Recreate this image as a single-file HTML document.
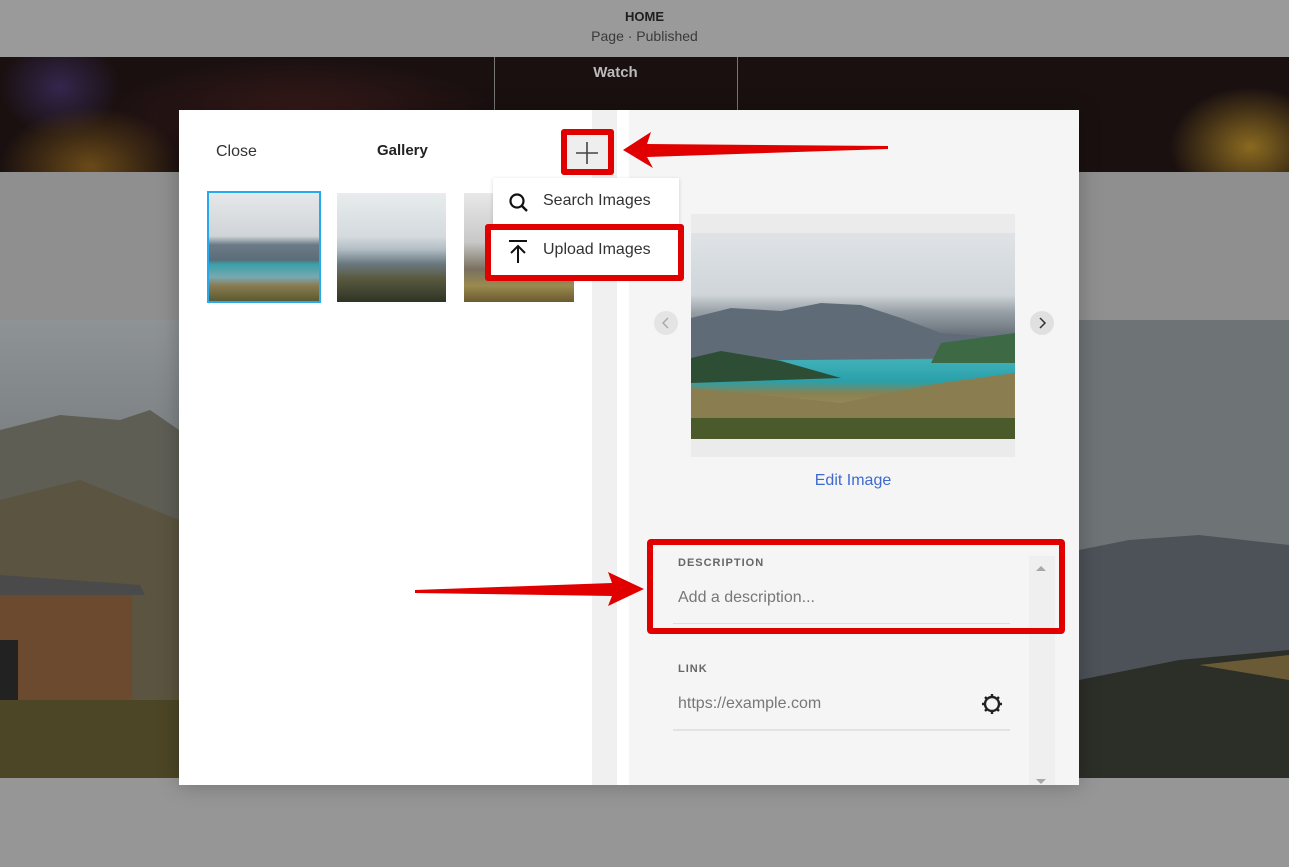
<!DOCTYPE html>
<html><head><meta charset="utf-8">
<style>
*{margin:0;padding:0;box-sizing:border-box}
body{width:1289px;height:867px;overflow:hidden;position:relative;background:#969696;font-family:"Liberation Sans",sans-serif}
.abs{position:absolute}
</style></head><body>
<!-- top bar -->
<div class="abs" style="left:0;top:0;width:1289px;height:57px;background:#9a9a9a"></div>
<div class="abs" style="left:0;top:9px;width:1289px;text-align:center;font-size:13px;font-weight:bold;color:#1e1e1e">HOME</div>
<div class="abs" style="left:0;top:28px;width:1289px;text-align:center;font-size:14px;color:#3a3a3a">Page · Published</div>
<!-- dark banner -->
<div class="abs" style="left:0;top:57px;width:1289px;height:115px;background:radial-gradient(ellipse 90px 60px at 90px 110px,#6a4a18,transparent),radial-gradient(ellipse 60px 50px at 60px 30px,#33264d,transparent),radial-gradient(ellipse 80px 60px at 1250px 90px,#8a6a20,transparent),radial-gradient(ellipse 200px 60px at 300px 60px,#3a1a1a,transparent),#1a1010"></div>
<div class="abs" style="left:494px;top:57px;width:1px;height:53px;background:#777"></div>
<div class="abs" style="left:737px;top:57px;width:1px;height:53px;background:#777"></div>
<div class="abs" style="left:494px;top:64px;width:243px;text-align:center;font-size:15px;font-weight:bold;color:#bbb">Watch</div>
<!-- gray middle -->
<div class="abs" style="left:0;top:172px;width:1289px;height:148px;background:#8f8f8f"></div>
<!-- mountain image sides -->
<div class="abs" style="left:0;top:320px;width:1289px;height:458px;background:linear-gradient(180deg,#8e9396 0%,#7d8284 25%,#5e5a4e 50%,#3e3b30 75%,#33301f 100%)"></div>
<svg class="abs" style="left:0;top:320px" width="179" height="458"><polygon points="0,110 60,95 120,100 150,90 179,110 179,458 0,458" fill="#5f5e55"/><polygon points="0,180 80,160 179,200 179,458 0,458" fill="#5a5440"/><polygon points="0,255 140,265 145,275 0,275" fill="#4a4a4a"/><rect x="0" y="275" width="132" height="140" fill="#6b4a30"/><rect x="0" y="320" width="18" height="90" fill="#222"/><rect x="0" y="380" width="179" height="78" fill="#4c4626"/></svg>
<svg class="abs" style="left:1079px;top:320px" width="210" height="458"><rect width="210" height="458" fill="#6e7376"/><polygon points="0,230 50,220 120,215 210,225 210,458 0,458" fill="#4c5258"/><polygon points="0,360 100,340 210,330 210,458 0,458" fill="#2c2e28"/><polygon points="120,345 210,335 210,360" fill="#6a5a35"/></svg>
<!-- modal -->
<div class="abs" style="left:179px;top:110px;width:900px;height:675px;background:#fff;box-shadow:0 0 20px rgba(0,0,0,.25)"></div>
<div class="abs" style="left:592px;top:110px;width:25px;height:675px;background:#f0f0f0"></div>
<div class="abs" style="left:629px;top:110px;width:450px;height:675px;background:#f5f5f5"></div>
<div class="abs" style="left:216px;top:143px;font-size:16px;color:#333">Close</div>
<div class="abs" style="left:377px;top:142px;font-size:15px;font-weight:bold;color:#222">Gallery</div>
<!-- thumbnails -->
<div class="abs" style="left:207px;top:191px;width:114px;height:112px;border:2px solid #27a9f0;background:linear-gradient(180deg,#e6e8ea 0%,#cfd4d8 40%,#6b7a86 48%,#5b6d7a 62%,#3aa0a8 66%,#7aa8b0 78%,#8a7a50 86%,#5a5a30 100%)"></div>
<div class="abs" style="left:337px;top:193px;width:109px;height:109px;background:linear-gradient(180deg,#e8ecee 0%,#d4dadd 40%,#b0bcc4 52%,#6a7880 65%,#5a5a40 78%,#2e3424 100%)"></div>
<div class="abs" style="left:464px;top:193px;width:110px;height:109px;background:linear-gradient(180deg,#e8e8e8 0%,#c8c8c8 45%,#7a7060 70%,#9a8a50 85%,#6a5a30 100%)"></div>
<!-- plus button -->
<div class="abs" style="left:561px;top:129px;width:53px;height:46px;border:6px solid #e00000;border-radius:3px;background:#eee"></div>
<svg class="abs" style="left:574px;top:140px" width="26" height="26"><path d="M13 2V24M2 13H24" stroke="#444" stroke-width="1.6"/></svg>
<!-- dropdown -->
<div class="abs" style="left:493px;top:178px;width:186px;height:100px;background:#fff;box-shadow:0 1px 4px rgba(0,0,0,.15)"></div>
<svg class="abs" style="left:508px;top:192px" width="22" height="22"><circle cx="9" cy="9" r="6.5" stroke="#111" stroke-width="2.2" fill="none"/><path d="M14 14L19 19" stroke="#111" stroke-width="2.4"/></svg>
<div class="abs" style="left:543px;top:192px;font-size:16px;color:#333">Search Images</div>
<div class="abs" style="left:485px;top:224px;width:199px;height:57px;border:6px solid #e00000;border-radius:3px;background:#fff"></div>
<svg class="abs" style="left:507px;top:239px" width="22" height="26"><path d="M2 2H20M11 24V7M4 14L11 7L18 14" stroke="#111" stroke-width="2" fill="none"/></svg>
<div class="abs" style="left:543px;top:241px;font-size:16px;color:#333">Upload Images</div>
<!-- arrow top -->
<svg class="abs" style="left:615px;top:128px" width="280" height="44"><polygon points="8,22 36,4 32,16 273,18 273,21 32,29 38,40" fill="#e00000"/></svg>
<!-- preview -->
<div class="abs" style="left:691px;top:214px;width:324px;height:243px;background:#ebebeb"></div>
<div class="abs" style="left:691px;top:233px;width:324px;height:206px;background:linear-gradient(180deg,#dfe3e6 0%,#cfd5d9 30%,#9aa2a8 38%,#6e7680 48%,#5a6870 58%,#3fb0b8 62%,#2aa0aa 72%,#8a8050 78%,#a09060 88%,#4a5a30 100%)"></div>
<svg class="abs" style="left:691px;top:233px" width="324" height="206"><polygon points="0,85 40,75 90,78 130,70 170,72 210,85 250,100 324,105 324,125 0,128" fill="#5f6c78"/><polygon points="0,125 30,118 90,128 150,145 0,150" fill="#2d4d35"/><polygon points="250,110 324,100 324,130 240,130" fill="#3d6a45"/><polygon points="0,155 150,170 250,150 324,140 324,206 0,206" fill="#8a7d50"/><rect y="185" width="324" height="21" fill="#4a5a2a"/></svg>
<div class="abs" style="left:654px;top:311px;width:24px;height:24px;border-radius:50%;background:#e4e4e4"></div>
<svg class="abs" style="left:654px;top:311px" width="24" height="24"><path d="M14 7L9 12L14 17" stroke="#aaa" stroke-width="1.5" fill="none"/></svg>
<div class="abs" style="left:1030px;top:311px;width:24px;height:24px;border-radius:50%;background:#e0e0e0"></div>
<svg class="abs" style="left:1030px;top:311px" width="24" height="24"><path d="M10 7L15 12L10 17" stroke="#333" stroke-width="1.5" fill="none"/></svg>
<div class="abs" style="left:691px;top:472px;width:324px;text-align:center;font-size:16px;color:#3e6ad0">Edit Image</div>
<!-- scrollbar -->
<div class="abs" style="left:1029px;top:556px;width:26px;height:229px;background:#efefef"></div>
<svg class="abs" style="left:1034px;top:563px" width="14" height="10"><path d="M2 8L7 3L12 8Z" fill="#a8a8a8"/></svg>
<svg class="abs" style="left:1034px;top:777px" width="14" height="8"><path d="M2 2L7 7L12 2Z" fill="#a8a8a8"/></svg>
<!-- description -->
<div class="abs" style="left:647px;top:539px;width:418px;height:95px;border:6px solid #e00000;border-radius:4px"></div>
<div class="abs" style="left:678px;top:557px;font-size:11px;font-weight:bold;letter-spacing:1px;color:#666">DESCRIPTION</div>
<div class="abs" style="left:678px;top:589px;font-size:16px;color:#777">Add a description...</div>
<div class="abs" style="left:673px;top:623px;width:337px;height:1px;background:#ddd"></div>
<div class="abs" style="left:678px;top:663px;font-size:11px;font-weight:bold;letter-spacing:1px;color:#666">LINK</div>
<div class="abs" style="left:678px;top:695px;font-size:16px;color:#777">https://example.com</div>
<svg class="abs" style="left:981px;top:693px" width="22" height="22"><circle cx="11" cy="11" r="7" stroke="#222" stroke-width="2.4" fill="none"/><path d="M11 1V4M11 18V21M1 11H4M18 11H21M4 4L6 6M16 16L18 18M4 18L6 16M16 6L18 4" stroke="#222" stroke-width="2.4"/></svg>
<div class="abs" style="left:673px;top:729px;width:337px;height:2px;background:#e3e3e3"></div>
<!-- arrow bottom -->
<svg class="abs" style="left:412px;top:570px" width="240" height="40"><polygon points="3,20 200,13 196,2 232,19 196,36 200,26 3,23" fill="#e00000"/></svg>
</body></html>
